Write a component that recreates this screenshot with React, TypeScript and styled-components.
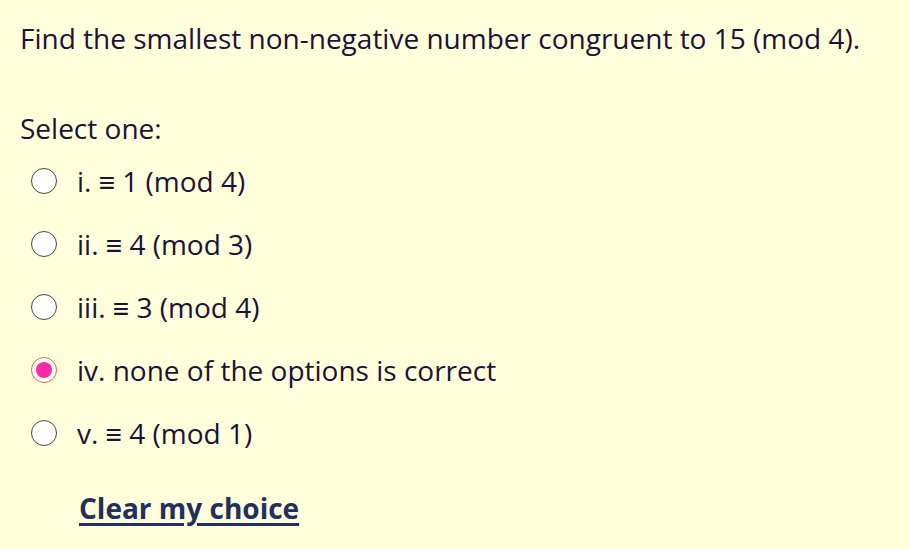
import React, { useState } from "react";
import styled, { createGlobalStyle } from "styled-components";

const Global = createGlobalStyle`
  html, body { margin: 0; padding: 0; background: #ffffdc; }
  body { font-family: "Open Sans", "Noto Sans", sans-serif; color: #1b1238; }
`;

const Page = styled.div`
  padding: 18px 20px 0 20px;
  font-size: 28px;
  line-height: 40px;
`;

const Question = styled.p`
  margin: 0 0 50px 0;
`;

const Prompt = styled.div`
  margin-bottom: 13px;
`;

const Options = styled.div`
  display: flex;
  flex-direction: column;
  gap: 23px;
  padding-left: 11px;
`;

const Option = styled.label`
  display: flex;
  align-items: center;
  gap: 20px;
  cursor: pointer;
`;

const Radio = styled.span<{ $checked: boolean }>`
  width: 26px;
  height: 26px;
  box-sizing: border-box;
  border-radius: 50%;
  flex: none;
  background: #fff;
  border: ${(p) => (p.$checked ? "1.5px solid #e2683e" : "1.5px solid #444")};
  display: flex;
  align-items: center;
  justify-content: center;
  &::after {
    content: "";
    width: 16px;
    height: 16px;
    border-radius: 50%;
    background: #fb2aa3;
    display: ${(p) => (p.$checked ? "block" : "none")};
  }
`;

const ClearLink = styled.a`
  display: inline-block;
  margin: 35px 0 0 59px;
  font-weight: 700;
  color: #22305f;
  text-decoration: underline;
  text-decoration-thickness: 3px;
  text-underline-offset: 4px;
  cursor: pointer;
`;

const options = [
  "i. ≡ 1 (mod 4)",
  "ii. ≡ 4 (mod 3)",
  "iii. ≡ 3 (mod 4)",
  "iv. none of the options is correct",
  "v. ≡ 4 (mod 1)",
];

export default function App() {
  const [sel, setSel] = useState<number | null>(3);
  return (
    <>
      <Global />
      <Page>
        <Question>Find the smallest non-negative number congruent to 15 (mod 4).</Question>
        <Prompt>Select one:</Prompt>
        <Options>
          {options.map((o, i) => (
            <Option key={i} onClick={() => setSel(i)}>
              <Radio $checked={sel === i} />
              <span>{o}</span>
            </Option>
          ))}
        </Options>
        <ClearLink onClick={() => setSel(null)}>Clear my choice</ClearLink>
      </Page>
    </>
  );
}
